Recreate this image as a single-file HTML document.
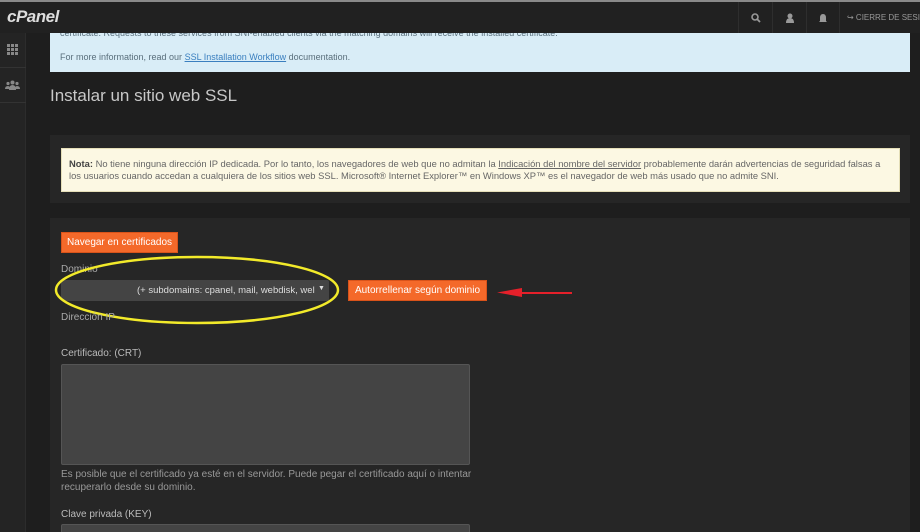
<!DOCTYPE html>
<html><head><style>
*{margin:0;padding:0;box-sizing:border-box}
html,body{width:920px;height:532px;overflow:hidden}
body{background:#1e1e1e;font-family:"Liberation Sans",sans-serif;position:relative;color:#bbb}
.a{position:absolute}
.hdr{left:0;top:0;width:920px;height:33px;background:#212121;border-top:2px solid #8a8a8a}
.side{left:0;top:33px;width:26px;height:499px;background:#242424;border-right:1px solid #2c2c2c}
.btn{background:#f4692a;color:#fff;font-size:10px;border:1px solid #d9531a;display:flex;align-items:center;justify-content:center;white-space:nowrap}
.sm{font-size:10px;color:#aaa;white-space:nowrap}
</style></head><body>
<div class="a hdr">
 <div class="a" style="left:7px;top:5px;font-size:17px;font-weight:bold;font-style:italic;color:#ddd;letter-spacing:-0.5px">cPanel</div>
 <div class="a" style="left:738px;top:0;width:1px;height:31px;background:#2e2e2e"></div>
 <div class="a" style="left:772px;top:0;width:1px;height:31px;background:#2e2e2e"></div>
 <div class="a" style="left:806px;top:0;width:1px;height:31px;background:#2e2e2e"></div>
 <div class="a" style="left:839px;top:0;width:1px;height:31px;background:#2e2e2e"></div>
 <svg class="a" style="left:751px;top:11px" width="10" height="10"><circle cx="4" cy="4" r="3" fill="none" stroke="#999" stroke-width="1.6"/><line x1="6" y1="6" x2="9" y2="9" stroke="#999" stroke-width="1.8"/></svg>
 <svg class="a" style="left:785px;top:11px" width="10" height="10"><circle cx="5" cy="3" r="2.5" fill="#999"/><path d="M1 10 Q1 5 5 5 Q9 5 9 10Z" fill="#999"/></svg>
 <svg class="a" style="left:818px;top:11px" width="10" height="10"><path d="M2 8 L2 5 Q2 1 5 1 Q8 1 8 5 L8 8 L9 9 L1 9Z" fill="#999"/></svg>
 <div class="a" style="left:847px;top:11px;font-size:8px;color:#999;white-space:nowrap">&#x21aa; CIERRE DE SESIÓ</div>
</div>
<div class="a side">
 <div class="a" style="left:0;top:0;width:26px;height:35px;border-bottom:1px solid #333"></div>
 <svg class="a" style="left:7px;top:11px" width="12" height="12" fill="#888"><rect x="0" y="0" width="3" height="3"/><rect x="4" y="0" width="3" height="3"/><rect x="8" y="0" width="3" height="3"/><rect x="0" y="4" width="3" height="3"/><rect x="4" y="4" width="3" height="3"/><rect x="8" y="4" width="3" height="3"/><rect x="0" y="8" width="3" height="3"/><rect x="4" y="8" width="3" height="3"/><rect x="8" y="8" width="3" height="3"/></svg>
 <div class="a" style="left:0;top:35px;width:26px;height:35px;border-bottom:1px solid #333"></div>
 <svg class="a" style="left:5px;top:47px" width="15" height="10" fill="#888"><circle cx="7.5" cy="2.5" r="2"/><circle cx="3" cy="3.5" r="1.6"/><circle cx="12" cy="3.5" r="1.6"/><path d="M4 10 Q4 5 7.5 5 Q11 5 11 10Z"/><path d="M0 9 Q0 6 3 6 Q5 6 5 9Z"/><path d="M10 9 Q10 6 12 6 Q15 6 15 9Z"/></svg>
</div>
<div class="a" style="left:50px;top:33px;width:860px;height:39px;background:#d9edf7;font-size:9px;color:#5a6f7c;overflow:hidden">
 <div class="a" style="left:10px;top:-5px;white-space:nowrap">certificate. Requests to these services from SNI-enabled clients via the matching domains will receive the installed certificate.</div>
 <div class="a" style="left:10px;top:19px;white-space:nowrap">For more information, read our <u style="color:#3a7fbf">SSL Installation Workflow</u> documentation.</div>
</div>
<div class="a" style="left:50px;top:86px;font-size:17px;color:#c8c8c8">Instalar un sitio web SSL</div>
<div class="a" style="left:50px;top:135px;width:860px;height:68px;background:#262626"></div>
<div class="a" style="left:61px;top:148px;width:839px;height:44px;background:#fcf8e3;border:1px solid #e5dfb8;font-size:9.4px;color:#666;padding:9px 7px;line-height:12px;white-space:nowrap"><b style="color:#444">Nota:</b> No tiene ninguna dirección IP dedicada. Por lo tanto, los navegadores de web que no admitan la <u>Indicación del nombre del servidor</u> probablemente darán advertencias de seguridad falsas a<br>los usuarios cuando accedan a cualquiera de los sitios web SSL. Microsoft® Internet Explorer™ en Windows XP™ es el navegador de web más usado que no admite SNI.</div>
<div class="a" style="left:50px;top:218px;width:860px;height:314px;background:#262626"></div>
<div class="a btn" style="left:61px;top:232px;width:117px;height:21px">Navegar en certificados</div>
<div class="a sm" style="left:61px;top:264px">Dominio</div>
<div class="a" style="left:61px;top:280px;width:268px;height:21px;background:#444;border-radius:2px;font-size:9.5px;color:#ddd;padding:5px 0 0 76px;white-space:nowrap;overflow:hidden">(+ subdomains: cpanel, mail, webdisk, wel<span class="a" style="left:257px;top:5px;font-size:7px">▼</span></div>
<div class="a btn" style="left:348px;top:280px;width:139px;height:21px">Autorrellenar según dominio</div>
<svg class="a" style="left:0;top:0" width="920" height="532"><ellipse cx="197" cy="290" rx="141" ry="33" fill="none" stroke="#f2ea2a" stroke-width="2.5"/><path d="M572 292 L522 292 L522 288 L497 292.5 L522 297 L522 294 L572 294Z" fill="#e5202a"/></svg>
<div class="a sm" style="left:61px;top:312px">Dirección IP</div>
<div class="a sm" style="left:61px;top:348px;color:#bbb">Certificado: (CRT)</div>
<div class="a" style="left:61px;top:364px;width:409px;height:101px;background:#444;border:1px solid #555;border-radius:2px"></div>
<div class="a" style="left:61px;top:468px;width:420px;line-height:13px;color:#999;font-size:10px">Es posible que el certificado ya esté en el servidor. Puede pegar el certificado aquí o intentar recuperarlo desde su dominio.</div>
<div class="a sm" style="left:61px;top:509px;color:#bbb">Clave privada (KEY)</div>
<div class="a" style="left:61px;top:524px;width:409px;height:20px;background:#444;border:1px solid #555;border-radius:2px"></div>
</body></html>
